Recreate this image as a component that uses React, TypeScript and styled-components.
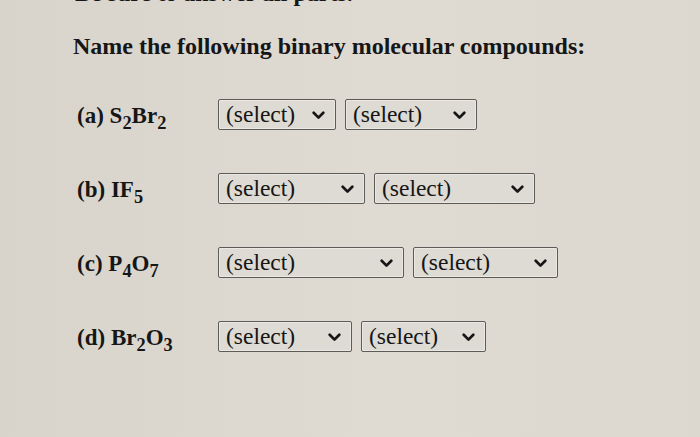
import styled, { createGlobalStyle } from "styled-components";

const GlobalStyle = createGlobalStyle`
  html, body {
    margin: 0;
    padding: 0;
    background: #dbd7cf;
  }
  body {
    width: 700px;
    height: 437px;
    overflow: hidden;
    font-family: "Liberation Serif", "Times New Roman", serif;
    color: #161616;
  }
`;

type Part = {
  letter: string;
  formula: [string, string][];
  widths: [number, number];
};

const parts: Part[] = [
  { letter: "a", formula: [["S", "2"], ["Br", "2"]], widths: [118, 132] },
  { letter: "b", formula: [["IF", "5"]], widths: [147, 161] },
  { letter: "c", formula: [["P", "4"], ["O", "7"]], widths: [186, 145] },
  { letter: "d", formula: [["Br", "2"], ["O", "3"]], widths: [134, 125] },
];

const Chevron = () => (
  <svg width="13" height="9" viewBox="0 0 13 9">
    <polyline
      points="1.7,1.8 6.5,6.6 11.3,1.8"
      fill="none"
      stroke="#161616"
      strokeWidth="2.7"
      strokeLinecap="round"
      strokeLinejoin="round"
    />
  </svg>
);

const App = () => {
  return (
    <>
      <GlobalStyle />
      <Page>
        <Instruction>Be sure to answer all parts.</Instruction>
        <Heading>Name the following binary molecular compounds:</Heading>
        <Rows>
          {parts.map((p) => (
            <Row key={p.letter}>
              <Label>
                ({p.letter}){" "}
                {p.formula.map(([el, n]) => (
                  <span key={el}>
                    {el}
                    <Sub>{n}</Sub>
                  </span>
                ))}
              </Label>
              <Selects>
                {p.widths.map((w, i) => (
                  <Dropdown key={i} $width={w}>
                    <span>(select)</span>
                    <Chevron />
                  </Dropdown>
                ))}
              </Selects>
            </Row>
          ))}
        </Rows>
      </Page>
    </>
  );
};

export default App;

const Page = styled.div`
  display: flow-root;
  height: 437px;
  overflow: hidden;
  padding-left: 75px;
  box-sizing: border-box;
  background: linear-gradient(90deg, #d8d4cc 0%, #dfdbd3 55%, #dcd8d0 100%);
`;

const Instruction = styled.div`
  font-size: 24px;
  font-weight: bold;
  line-height: 28px;
  height: 28px;
  margin-top: -21px;
  white-space: nowrap;
`;

const Heading = styled.h1`
  margin: 25px 0 0 -2px;
  font-size: 24px;
  font-weight: bold;
  line-height: 28px;
`;

const Rows = styled.div`
  display: flex;
  flex-direction: column;
  gap: 43px;
  margin-top: 39px;
`;

const Row = styled.div`
  display: flex;
  align-items: center;
  height: 31px;
`;

const Label = styled.div`
  width: 141px;
  padding-left: 2px;
  font-size: 23px;
  font-weight: bold;
  white-space: nowrap;
  padding-top: 2px;
`;

const Sub = styled.sub`
  font-size: 0.8em;
  vertical-align: -0.3em;
  line-height: 0;
`;

const Selects = styled.div`
  display: flex;
  gap: 9px;
`;

const Dropdown = styled.div<{ $width: number }>`
  width: ${(p) => p.$width}px;
  height: 31px;
  box-sizing: border-box;
  display: flex;
  align-items: center;
  justify-content: space-between;
  padding: 1px 10px 0 7px;
  border: 1.5px solid #5c5b58;
  border-radius: 2px;
  box-shadow: inset 0 0 0 1px #ebe8e2;
  background: #dedbd4;
  font-size: 23.5px;
  line-height: 1;
`;
